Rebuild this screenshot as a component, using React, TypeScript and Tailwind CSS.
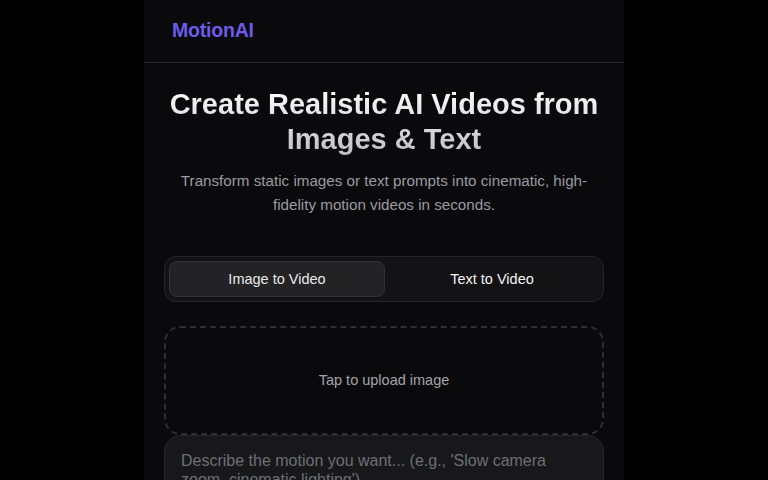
import { useState } from 'react'

export default function App() {
  const [mode, setMode] = useState<'image' | 'text'>('image')

  return (
    <div
      className="min-h-screen bg-black flex justify-center"
      style={{ fontFamily: '"Liberation Sans", Arial, sans-serif' }}
    >
      <div className="w-[480px] min-h-screen bg-[#0a0a0c] flex flex-col">
        <header className="h-[63px] px-7 flex items-center border-b border-[#2a2a2e]">
          <span className="text-[19.5px] font-bold text-[#6c5ce8] tracking-[-0.2px]">MotionAI</span>
        </header>

        <main className="px-5 pt-[24px] flex flex-col">
          <h1 className="text-center text-[29px] leading-[35px] font-bold bg-gradient-to-b from-white to-[#bdbdc2] bg-clip-text text-transparent">
            Create Realistic AI Videos from Images &amp; Text
          </h1>
          <p className="mt-[12px] mx-auto max-w-[420px] text-center text-[15.2px] leading-[23.5px] text-[#9a9aa2]">
            Transform static images or text prompts into cinematic, high-fidelity motion videos in seconds.
          </p>

          <div className="mt-[40px] h-[46px] p-[4px] flex rounded-xl bg-[#131316] border border-[#26262a]">
            <button
              onClick={() => setMode('image')}
              className={`flex-1 rounded-lg pt-[1px] text-[14.5px] ${
                mode === 'image'
                  ? 'bg-[#232326] border border-[#333337] text-[#e8e8ea]'
                  : 'text-[#f2f2f4]'
              }`}
            >
              Image to Video
            </button>
            <button
              onClick={() => setMode('text')}
              className={`flex-1 rounded-lg pt-[1px] text-[14.5px] ${
                mode === 'text'
                  ? 'bg-[#232326] border border-[#333337] text-[#e8e8ea]'
                  : 'text-[#f2f2f4]'
              }`}
            >
              Text to Video
            </button>
          </div>

          <div className="mt-[24px] h-[109px] rounded-2xl border-2 border-dashed border-[#2e2e33] flex items-center justify-center">
            <span className="text-[14.5px] text-[#a3a3aa]">Tap to upload image</span>
          </div>

          <textarea
            rows={3}
            placeholder="Describe the motion you want... (e.g., 'Slow camera zoom, cinematic lighting')"
            className="mt-0 w-full rounded-2xl bg-[#18181b] border border-[#26262a] px-4 pt-[15px] text-[16px] leading-[19px] text-white placeholder:text-[#6e6e75] resize-none outline-none"
          />
        </main>
      </div>
    </div>
  )
}
